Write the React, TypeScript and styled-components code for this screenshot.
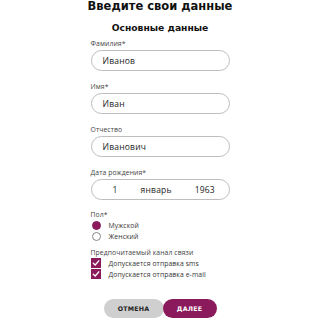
import React from 'react'
import styled, { createGlobalStyle } from 'styled-components'

const purple = '#8b1a5c'
const heading = "'DejaVu Sans', 'Open Sans', sans-serif"

const GlobalStyle = createGlobalStyle`
  html, body {
    margin: 0;
    padding: 0;
    background: #ffffff;
    font-family: 'Open Sans', 'Liberation Sans', sans-serif;
    color: #1e1e1e;
  }
`

const Page = styled.div`
  display: flex;
  flex-direction: column;
  align-items: center;
  width: 320px;
  height: 320px;
  overflow: hidden;
`

const Title = styled.h1`
  margin: 0;
  font-family: ${heading};
  font-size: 11.5px;
  line-height: 12px;
  font-weight: 700;
  color: #111;
`

const Subtitle = styled.h2`
  margin: 10px 0 0;
  font-family: ${heading};
  font-size: 9.2px;
  line-height: 11px;
  font-weight: 700;
  color: #111;
`

const Form = styled.form`
  display: flex;
  flex-direction: column;
  width: 139px;
  margin-top: 7px;
`

const Field = styled.div`
  display: flex;
  flex-direction: column;
  gap: 2px;
  margin-bottom: 12px;
`

const Label = styled.label`
  font-size: 6.8px;
  line-height: 8px;
  letter-spacing: 0.1px;
  color: #444;
`

const Input = styled.div`
  display: flex;
  align-items: center;
  box-sizing: border-box;
  height: 21px;
  padding: 0 11px;
  border: 1px solid #bdbdbd;
  border-radius: 11px;
  font-size: 8.5px;
  letter-spacing: 0.2px;
  color: #222;
`

const DateInput = styled(Input)`
  gap: 23px;
  padding-left: 21px;
`

const Group = styled.div<{ $top?: number; $gap?: number }>`
  display: flex;
  flex-direction: column;
  gap: ${p => p.$gap ?? 2}px;
  margin-top: ${p => p.$top ?? 0}px;
`

const Option = styled.div<{ $inset?: number }>`
  display: flex;
  align-items: center;
  gap: 8px;
  height: 10px;
  padding-left: ${p => p.$inset ?? 0}px;
  font-size: 6.8px;
  letter-spacing: 0.1px;
  color: #333;
`

const Radio = styled.span<{ $checked?: boolean }>`
  box-sizing: border-box;
  width: 9px;
  height: 9px;
  border-radius: 50%;
  border: 1px solid ${p => (p.$checked ? purple : '#888')};
  background: ${p => (p.$checked ? purple : '#fff')};
`

const Check = styled.span`
  display: flex;
  align-items: center;
  justify-content: center;
  width: 10px;
  height: 10px;
  background: ${purple};
`

const Buttons = styled.div`
  display: flex;
  justify-content: center;
  margin-top: 20px;
`

const Button = styled.button<{ $primary?: boolean }>`
  height: 19px;
  width: ${p => (p.$primary ? 54 : 60)}px;
  margin-left: ${p => (p.$primary ? -1 : 0)}px;
  border: none;
  border-radius: 10px;
  background: ${p => (p.$primary ? purple : '#cfcfcf')};
  color: ${p => (p.$primary ? '#fff' : '#222')};
  font-family: ${heading};
  font-size: 6.3px;
  font-weight: 700;
  letter-spacing: 0.2px;
  padding: 0;
`

const Tick = () => (
  <svg width="8" height="8" viewBox="0 0 8 8">
    <path d="M1.3 4.2 L3.2 6 L6.8 1.8" fill="none" stroke="#fff" strokeWidth="1.3" strokeLinecap="round" strokeLinejoin="round" />
  </svg>
)

const fields = [
  { label: 'Фамилия*', value: 'Иванов' },
  { label: 'Имя*', value: 'Иван' },
  { label: 'Отчество', value: 'Иванович' }
]

export default function App() {
  return (
    <>
      <GlobalStyle />
      <Page>
        <Title>Введите свои данные</Title>
        <Subtitle>Основные данные</Subtitle>
        <Form>
          {fields.map(f => (
            <Field key={f.label}>
              <Label>{f.label}</Label>
              <Input>{f.value}</Input>
            </Field>
          ))}
          <Field>
            <Label>Дата рождения*</Label>
            <DateInput>
              <span>1</span>
              <span>январь</span>
              <span>1963</span>
            </DateInput>
          </Field>
          <Group $top={-1} $gap={1}>
            <Label>Пол*</Label>
            <Option $inset={1}>
              <Radio $checked />
              <span>Мужской</span>
            </Option>
            <Option $inset={1}>
              <Radio />
              <span>Женский</span>
            </Option>
          </Group>
          <Group $top={8} $gap={1}>
            <Label>Предпочитаемый канал связи</Label>
            <Option>
              <Check><Tick /></Check>
              <span>Допускается отправка sms</span>
            </Option>
            <Option>
              <Check><Tick /></Check>
              <span>Допускается отправка e-mail</span>
            </Option>
          </Group>
          <Buttons>
            <Button type="button">ОТМЕНА</Button>
            <Button type="button" $primary>ДАЛЕЕ</Button>
          </Buttons>
        </Form>
      </Page>
    </>
  )
}
